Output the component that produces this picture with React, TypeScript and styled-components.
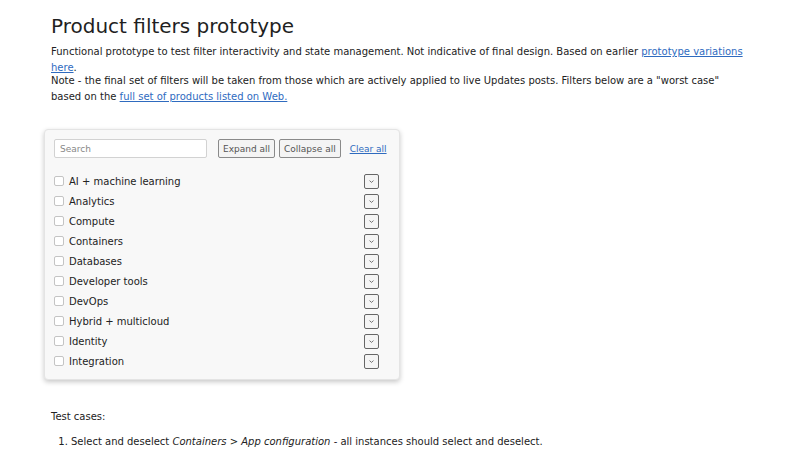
import styled, { createGlobalStyle } from "styled-components";
import { useState } from "react";

const GlobalStyle = createGlobalStyle`
    body {
        margin: 0;
        background: #fff;
        color: #222;
        font-family: "DejaVu Sans", Verdana, sans-serif;
    }
`;

const Page = styled.div`
    padding: 14px 51px 0 51px;
`;

const Title = styled.h1`
    font-size: 20px;
    font-weight: 400;
    line-height: 24px;
    margin: 0 0 6px 0;
    color: #1f1f1f;
`;

const Intro = styled.p<{ $tight?: boolean }>`
    font-size: 10px;
    line-height: 16px;
    margin: ${(p) => (p.$tight ? "-3px 0 0 0" : "0")};
    max-width: 700px;
`;

const Link = styled.a`
    color: #2f6bbf;
    text-decoration: underline;
`;

const FilterPanel = styled.div`
    margin: 24px 0 0 -7px;
    width: 356px;
    box-sizing: border-box;
    padding: 9px 9px 8px 9px;
    background: #f8f8f8;
    border: 1px solid #e4e4e4;
    border-radius: 4px;
    box-shadow: 0 2px 5px rgba(0, 0, 0, 0.22);
`;

const Toolbar = styled.div`
    display: flex;
    align-items: center;
    margin-bottom: 13px;
`;

const SearchInput = styled.input`
    width: 153px;
    height: 19px;
    box-sizing: border-box;
    border: 1px solid #d2d2d2;
    border-radius: 2px;
    background: #fff;
    padding: 0 5px;
    font-family: inherit;
    font-size: 9px;
    &::placeholder {
        color: #888;
    }
`;

const ToolButton = styled.button<{ $gap?: number }>`
    height: 19px;
    box-sizing: border-box;
    border: 1px solid #8a8a8a;
    border-radius: 2px;
    background: #f4f4f4;
    color: #555;
    font-family: inherit;
    font-size: 9px;
    white-space: nowrap;
    padding: 0 4px;
    margin-left: ${(p) => p.$gap ?? 4}px;
`;

const ClearLink = styled.a`
    margin-left: 9px;
    font-size: 9px;
    white-space: nowrap;
    color: #2f6bbf;
    text-decoration: underline;
`;

const FilterList = styled.ul`
    list-style: none;
    margin: 0;
    padding: 0;
`;

const FilterRow = styled.li`
    display: flex;
    align-items: center;
    height: 20px;
`;

const Check = styled.span`
    width: 10px;
    height: 10px;
    box-sizing: border-box;
    border: 1px solid #c4c4c4;
    border-radius: 2px;
    background: #fff;
    margin-right: 5px;
    flex: none;
`;

const Label = styled.span`
    font-size: 10px;
    flex: 1;
    color: #222;
`;

const ExpandButton = styled.button`
    width: 15px;
    height: 15px;
    box-sizing: border-box;
    padding: 0;
    margin-right: 11px;
    border: 1px solid #666;
    border-radius: 2px;
    background: #f4f4f4;
    display: flex;
    align-items: center;
    justify-content: center;
`;

const TestHeading = styled.p`
    font-size: 10px;
    line-height: 16px;
    margin: 29px 0 0 0;
`;

const TestList = styled.ol`
    font-size: 10px;
    margin: 9px 0 0 0;
    padding-left: 20px;
    line-height: 16px;
    em {
        font-style: italic;
    }
`;

const filters = [
    "AI + machine learning",
    "Analytics",
    "Compute",
    "Containers",
    "Databases",
    "Developer tools",
    "DevOps",
    "Hybrid + multicloud",
    "Identity",
    "Integration",
];

function Chevron() {
    return (
        <svg width="9" height="9" viewBox="0 0 10 10">
            <path d="M2.8 4 L5 6 L7.2 4" fill="none" stroke="#555" strokeWidth="0.9" />
        </svg>
    );
}

export default function App() {
    const [query, setQuery] = useState("");
    const shown = filters.filter((f) =>
        f.toLowerCase().includes(query.toLowerCase())
    );

    return (
        <>
            <GlobalStyle />
            <Page>
                <Title>Product filters prototype</Title>
                <Intro>
                    Functional prototype to test filter interactivity and state
                    management. Not indicative of final design. Based on earlier{" "}
                    <Link href="#">prototype variations here</Link>.
                </Intro>
                <Intro $tight>
                    Note - the final set of filters will be taken from those which
                    are actively applied to live Updates posts. Filters below are a
                    "worst case" based on the{" "}
                    <Link href="#">full set of products listed on Web.</Link>
                </Intro>
                <FilterPanel>
                    <Toolbar>
                        <SearchInput
                            placeholder="Search"
                            value={query}
                            onChange={(e) => setQuery(e.target.value)}
                        />
                        <ToolButton $gap={11}>Expand all</ToolButton>
                        <ToolButton>Collapse all</ToolButton>
                        <ClearLink href="#">Clear all</ClearLink>
                    </Toolbar>
                    <FilterList>
                        {shown.map((f) => (
                            <FilterRow key={f}>
                                <Check />
                                <Label>{f}</Label>
                                <ExpandButton>
                                    <Chevron />
                                </ExpandButton>
                            </FilterRow>
                        ))}
                    </FilterList>
                </FilterPanel>
                <TestHeading>Test cases:</TestHeading>
                <TestList>
                    <li>
                        Select and deselect <em>Containers &gt; App configuration</em>{" "}
                        - all instances should select and deselect.
                    </li>
                </TestList>
            </Page>
        </>
    );
}
